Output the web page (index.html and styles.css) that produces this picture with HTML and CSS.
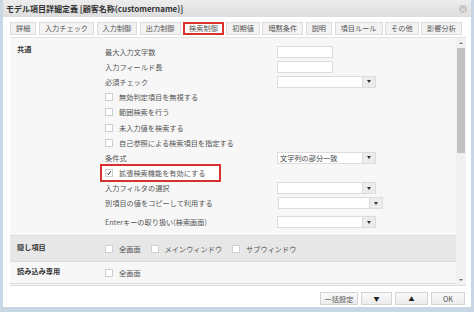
FILE: index.html
```html
<!DOCTYPE html>
<html lang="ja">
<head>
  <meta charset="UTF-8" />
  <title>モデル項目詳細定義</title>
  <link rel="stylesheet" href="styles.css">
</head>
<body>
  <div class="window">
    <div class="titlebar">
      <span class="title">モデル項目詳細定義 [顧客名称(customername)]</span>
      <span class="close">×</span>
    </div>

    <div class="body">
      <ul class="tabs">
        <li class="tab">詳細</li>
        <li class="tab">入力チェック</li>
        <li class="tab">入力制御</li>
        <li class="tab">出力制御</li>
        <li class="tab active">検索制御</li>
        <li class="tab">初期値</li>
        <li class="tab">暗黙条件</li>
        <li class="tab">説明</li>
        <li class="tab">項目ルール</li>
        <li class="tab">その他</li>
        <li class="tab">影響分析</li>
      </ul>

      <div class="panel">
        <div class="content">
          <!-- 共通 -->
          <div class="section">
            <div class="sec-label">共通</div>
            <div class="rows">
              <div class="row">
                <span class="label">最大入力文字数</span>
                <span class="ctrl"><span class="input"></span></span>
              </div>
              <div class="row">
                <span class="label">入力フィールド長</span>
                <span class="ctrl"><span class="input"></span></span>
              </div>
              <div class="row">
                <span class="label">必須チェック</span>
                <span class="ctrl">
                  <span class="select"><span class="field"></span><span class="arrow"></span></span>
                </span>
              </div>
              <div class="row">
                <span class="check"><span class="box"></span>無効判定項目を無視する</span>
              </div>
              <div class="row">
                <span class="check"><span class="box"></span>範囲検索を行う</span>
              </div>
              <div class="row">
                <span class="check"><span class="box"></span>未入力値を検索する</span>
              </div>
              <div class="row">
                <span class="check"><span class="box"></span>自己参照による検索項目を指定する</span>
              </div>
              <div class="row">
                <span class="label">条件式</span>
                <span class="ctrl">
                  <span class="select"><span class="field">文字列の部分一致</span><span class="arrow"></span></span>
                </span>
              </div>
              <div class="row">
                <span class="check marked">
                  <span class="box">
                    <svg width="8" height="8" viewBox="0 0 8 8"><polyline points="1.5,4.5 3.2,6.3 6.5,1.5" fill="none" stroke="#333" stroke-width="1.3"/></svg>
                  </span>拡張検索機能を有効にする
                </span>
              </div>
              <div class="row">
                <span class="label">入力フィルタの選択</span>
                <span class="ctrl">
                  <span class="select"><span class="field"></span><span class="arrow"></span></span>
                </span>
              </div>
              <div class="row">
                <span class="label">別項目の値をコピーして利用する</span>
                <span class="ctrl">
                  <span class="select wide"><span class="field"></span><span class="arrow"></span></span>
                </span>
              </div>
              <div class="row last">
                <span class="label">Enterキーの取り扱い(検索画面)</span>
                <span class="ctrl">
                  <span class="select"><span class="field"></span><span class="arrow"></span></span>
                </span>
              </div>
            </div>
          </div>

          <!-- 隠し項目 -->
          <div class="section alt">
            <div class="sec-label">隠し項目</div>
            <div class="inline">
              <span class="check"><span class="box"></span>全画面</span>
              <span class="check"><span class="box"></span>メインウィンドウ</span>
              <span class="check"><span class="box"></span>サブウィンドウ</span>
            </div>
          </div>

          <!-- 読み込み専用 -->
          <div class="section thin">
            <div class="sec-label">読み込み専用</div>
            <div class="inline">
              <span class="check"><span class="box"></span>全画面</span>
            </div>
          </div>
        </div>

        <div class="scrollbar">
          <span class="sb-up"></span>
          <span class="sb-track"><span class="sb-thumb"></span></span>
          <span class="sb-down"></span>
        </div>
      </div>

      <div class="footer">
        <button class="btn">一括設定</button>
        <button class="btn down">▼</button>
        <button class="btn up">▲</button>
        <button class="btn ok">OK</button>
      </div>
    </div>
  </div>
</body>
</html>
```

FILE: styles.css
```css
body {
  margin: 0;
  padding: 0;
  font-family: "Noto Sans CJK JP", "Noto Sans", sans-serif;
  font-size: 7.2px;
  color: #555;
  background-color: #c9d7e5;
}

.window {
  width: 468px;
  height: 307px;
  margin-left: 3px;
  background-color: #fff;
  display: flex;
  flex-direction: column;
}

.titlebar {
  height: 17px;
  background: linear-gradient(#ededed, #dedede);
  display: flex;
  align-items: center;
  justify-content: space-between;
  padding: 0 4px 0 3px;
}

.title {
  font-size: 8px;
  font-weight: bold;
  color: #333;
}

.close {
  width: 8px;
  height: 8px;
  border-radius: 50%;
  background-color: #c4c4c4;
  color: #f4f4f4;
  font-size: 7px;
  line-height: 8px;
  text-align: center;
}

.body {
  flex: 1;
  display: flex;
  flex-direction: column;
  padding: 0 5px 0 7px;
}

.tabs {
  list-style: none;
  margin: 5px 0 0 0;
  padding: 0;
  display: flex;
  gap: 2.5px;
}

.tab {
  flex-shrink: 0;
  white-space: nowrap;
  height: 13px;
  line-height: 11px;
  padding: 0 5px;
  border: 1px solid #dcdcdc;
  background-color: #f3f3f3;
  box-sizing: border-box;
}

.tab.active {
  border: 2px solid #d8322f;
  line-height: 9px;
  padding: 0 4px;
  background-color: #fff;
}

.panel {
  margin-top: 2px;
  height: 247px;
  display: flex;
  border-top: 1px solid #e2e2e2;
  border-bottom: 1px solid #dcdcdc;
}

.content {
  flex: 1;
  background-color: #f7f7f7;
}

.section {
  display: flex;
  border-bottom: 1px solid #dedede;
}

.sec-label {
  width: 88px;
  padding: 5px 0 0 7px;
  font-weight: bold;
  color: #333;
  line-height: 12px;
}

.rows {
  flex: 1;
  padding: 6px 0 5px 0;
}

.row {
  height: 15.2px;
  display: flex;
  align-items: center;
}

.row.last {
  margin-top: 3.5px;
}

.label {
  width: 172px;
}

.ctrl {
  display: flex;
}

.input {
  width: 56px;
  height: 12px;
  box-sizing: border-box;
  border: 1px solid #dcdcdc;
  background-color: #fff;
}

.select {
  display: flex;
  height: 12px;
}

.select .field {
  width: 86px;
  box-sizing: border-box;
  border: 1px solid #dcdcdc;
  background-color: #fff;
  padding-left: 2px;
  line-height: 10px;
  color: #444;
}

.select.wide {
  margin-left: 1px;
}

.select.wide .field {
  width: 92px;
}

.arrow {
  width: 13px;
  box-sizing: border-box;
  border: 1px solid #dcdcdc;
  border-left: none;
  background-color: #ececec;
  display: flex;
  align-items: center;
  justify-content: center;
}

.arrow::after {
  content: "";
  border-left: 2.5px solid transparent;
  border-right: 2.5px solid transparent;
  border-top: 3px solid #333;
}

.check {
  display: flex;
  align-items: center;
  gap: 6px;
}

.box {
  width: 8px;
  height: 8px;
  box-sizing: border-box;
  border: 1px solid #cfcfcf;
  background-color: #fff;
  display: flex;
  align-items: center;
  justify-content: center;
}

.box svg {
  display: block;
}

.check.marked {
  outline: 2px solid #d8322f;
  outline-offset: 0;
  padding: 2px 14px 2px 3px;
  margin-left: -3px;
  background-color: #fff;
}

.section.alt {
  background-color: #e7e7e7;
  height: 26px;
  box-sizing: border-box;
}

.section.thin {
  height: 22px;
  box-sizing: border-box;
}

.inline {
  display: flex;
  gap: 10px;
  padding-top: 7px;
  height: 12px;
  align-items: center;
}

.section.thin .inline {
  padding-top: 5px;
}

.section.thin .sec-label {
  padding-top: 3px;
}

.scrollbar {
  width: 10px;
  background-color: #f1f1f1;
  display: flex;
  flex-direction: column;
  align-items: center;
}

.sb-up,
.sb-down {
  height: 10px;
  display: flex;
  align-items: center;
  justify-content: center;
}

.sb-up::after {
  content: "";
  border-left: 2px solid transparent;
  border-right: 2px solid transparent;
  border-bottom: 2px solid #777;
}

.sb-down::after {
  content: "";
  border-left: 2px solid transparent;
  border-right: 2px solid transparent;
  border-top: 2px solid #777;
}

.sb-track {
  flex: 1;
  width: 8px;
}

.sb-thumb {
  display: block;
  height: 105px;
  background-color: #c1c1c1;
}

.footer {
  display: flex;
  justify-content: flex-end;
  gap: 3px;
  padding: 6px 1px 0 0;
}

.btn {
  height: 13px;
  width: 38px;
  padding: 0;
  font-family: inherit;
  font-size: 7.2px;
  color: #555;
  border: 1px solid #d4d4d4;
  background: linear-gradient(#fafafa, #ececec);
}

.btn.down,
.btn.up {
  font-size: 6px;
  color: #222;
}

.btn.down {
  width: 31px;
}

.btn.up {
  width: 33px;
}

.btn.ok {
  width: 34px;
}
```
